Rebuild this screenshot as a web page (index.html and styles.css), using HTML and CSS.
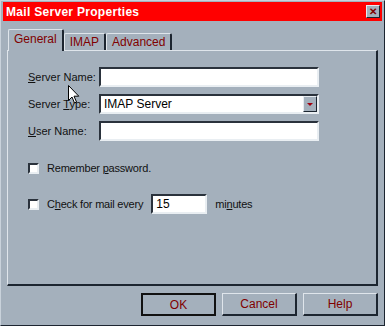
FILE: index.html
```html
<!DOCTYPE html>
<html lang="en">

<head>
    <meta charset="UTF-8">
    <title>Mail Server Properties</title>
    <link rel="stylesheet" href="styles.css">
</head>

<body>
    <div class="window">
        <div class="titlebar">
            <span class="title">Mail Server Properties</span>
            <span class="close">&#x2715;</span>
        </div>

        <div class="tabs">
            <div class="tab active">General</div>
            <div class="tab">IMAP</div>
            <div class="tab">Advanced</div>
        </div>

        <div class="panel">
            <div class="row">
                <label class="label"><u>S</u>erver Name:</label>
                <input class="field" type="text">
            </div>
            <div class="row">
                <label class="label">Server <u>T</u>ype:</label>
                <div class="combo">
                    <span class="combo-text">IMAP Server</span>
                    <span class="combo-btn"><span class="arrow"></span></span>
                </div>
            </div>
            <div class="row">
                <label class="label"><u>U</u>ser Name:</label>
                <input class="field" type="text">
            </div>

            <div class="check-row first">
                <span class="box"></span>
                <span>Remember <u>p</u>assword.</span>
            </div>
            <div class="check-row">
                <span class="box"></span>
                <span>C<u>h</u>eck for mail every</span>
                <input class="small-field" type="text" value="15">
                <span class="minutes">mi<u>n</u>utes</span>
            </div>

            <!-- курсор мыши поверх формы -->
            <svg class="cursor" width="12" height="19" viewBox="0 0 12 19">
                <path d="M0.5 0.5 L0.5 15.5 L4 12 L6.5 18 L8.5 17 L6 11.2 L10.8 11.2 Z" fill="#fff" stroke="#000" stroke-width="1"/>
            </svg>
        </div>

        <div class="buttons">
            <button class="btn default">OK</button>
            <button class="btn">Cancel</button>
            <button class="btn">Help</button>
        </div>
    </div>
</body>

</html>
```

FILE: styles.css
```css
body {
    margin: 0;
    font-family: "Liberation Sans", Arial, sans-serif;
    font-size: 11px;
    background-color: #a4b0bc;
}

.window {
    width: 385px;
    height: 326px;
    box-sizing: border-box;
    background-color: #a4b0bc;
    border: 1px solid #c9d2db;
    border-right-color: #1c2530;
    border-bottom-color: #1c2530;
    padding: 1px 2px;
}

.titlebar {
    height: 19px;
    background-color: #ff0000;
    display: flex;
    align-items: center;
    justify-content: space-between;
    padding: 0 2px 0 3px;
}

.title {
    color: white;
    font-weight: bold;
    font-size: 12px;
    letter-spacing: 0.3px;
}

.close {
    width: 14px;
    height: 13px;
    box-sizing: border-box;
    background-color: #a4b0bc;
    border: 1px solid #e6ebf0;
    border-right-color: #1c2530;
    border-bottom-color: #1c2530;
    color: #800000;
    font-size: 10px;
    line-height: 11px;
    text-align: center;
    font-weight: bold;
}

.tabs {
    display: flex;
    align-items: flex-end;
    margin-top: 7px;
    padding-left: 5px;
    height: 22px;
}

.tab {
    color: #800000;
    font-size: 12px;
    height: 17px;
    line-height: 16px;
    padding: 0 5px;
    border: 1px solid #dfe5eb;
    border-bottom: none;
    border-right: 2px solid #1c2530;
    border-radius: 2px 2px 0 0;
    box-sizing: border-box;
}

.tab.active {
    height: 22px;
    line-height: 18px;
    padding: 0 5px;
    position: relative;
    top: 1px;
    background-color: #a4b0bc;
    z-index: 1;
}

.panel {
    position: relative;
    margin: 0 4px 0 4px;
    height: 236px;
    box-sizing: border-box;
    border: 1px solid #dfe5eb;
    border-right: 2px solid #1c2530;
    border-bottom: 2px solid #1c2530;
    padding: 16px 0 0 20px;
}

.row {
    display: flex;
    align-items: center;
    margin-bottom: 7px;
}

.label {
    width: 71px;
    white-space: nowrap;
    color: #111;
}

.field,
.combo,
.small-field {
    box-sizing: border-box;
    height: 20px;
    border: 2px solid #2a323c;
    border-right-color: #e9eef2;
    border-bottom-color: #e9eef2;
    background: white;
    font-family: inherit;
    font-size: 12px;
    padding: 0 3px;
    margin: 0;
}

.field {
    width: 220px;
}

.combo {
    width: 220px;
    display: flex;
    align-items: center;
    justify-content: space-between;
    padding: 0 0 0 3px;
}

.combo-btn {
    width: 14px;
    height: 16px;
    box-sizing: border-box;
    background-color: #a4b0bc;
    border: 1px solid #e6ebf0;
    border-right-color: #1c2530;
    border-bottom-color: #1c2530;
    display: flex;
    align-items: center;
    justify-content: center;
}

.arrow {
    width: 0;
    height: 0;
    border-left: 3px solid transparent;
    border-right: 3px solid transparent;
    border-top: 3px solid #a00010;
}

.check-row {
    display: flex;
    align-items: center;
    gap: 8px;
    color: #111;
    letter-spacing: -0.2px;
    margin-bottom: 20px;
}

.check-row.first {
    margin-top: 21px;
}

.box {
    width: 11px;
    height: 11px;
    box-sizing: border-box;
    background: white;
    border: 2px solid #2a323c;
    border-right-color: #e9eef2;
    border-bottom-color: #e9eef2;
}

.small-field {
    width: 56px;
    margin: 0;
    letter-spacing: 0;
}

.cursor {
    position: absolute;
    left: 60px;
    top: 34px;
}

.buttons {
    display: flex;
    justify-content: flex-end;
    gap: 6px;
    margin: 7px 4px 0 0;
}

.btn {
    width: 75px;
    height: 23px;
    background-color: #a4b0bc;
    color: #800000;
    font-family: inherit;
    font-size: 12px;
    border: 1px solid #dfe5eb;
    border-right: 2px solid #1c2530;
    border-bottom: 2px solid #1c2530;
    padding: 0;
}

.btn.default {
    border: 2px solid #111;
}
```
